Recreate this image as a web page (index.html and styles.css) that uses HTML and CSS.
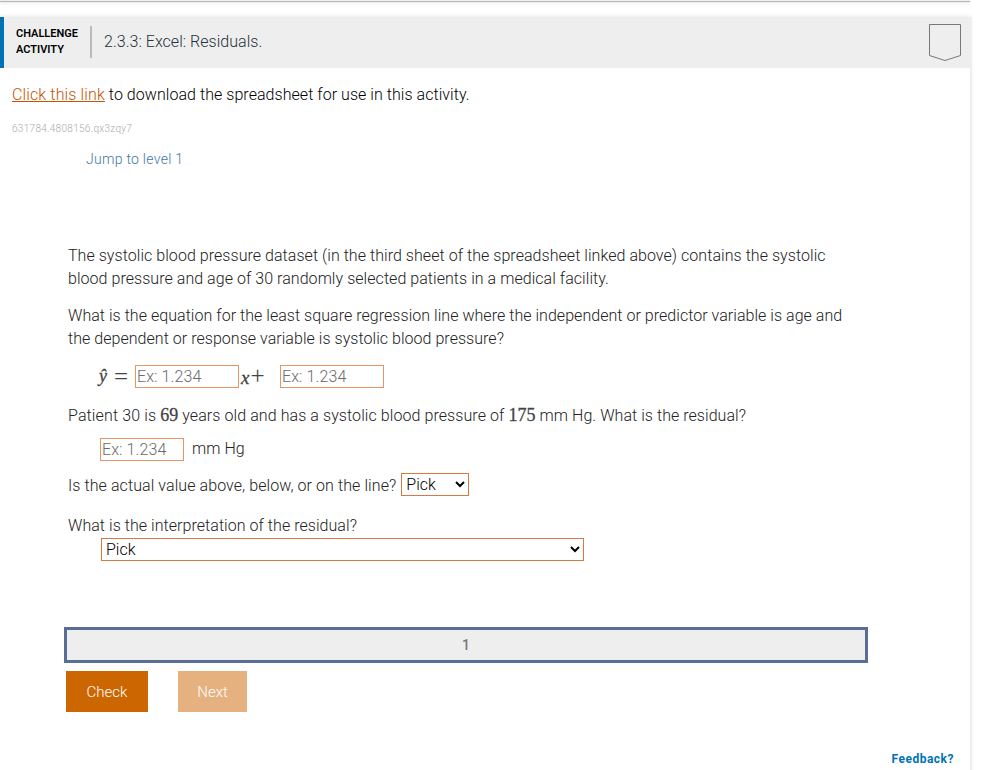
FILE: index.html
```html
<!DOCTYPE html>
<html lang="en">
<head>
    <meta charset="UTF-8">
    <meta name="viewport" content="width=device-width, initial-scale=1.0">
    <title>2.3.3: Excel: Residuals.</title>
    <link rel="stylesheet" href="styles.css">
</head>
<body>
    <div class="previous-card"></div>

    <div class="activity">
        <!-- Title bar -->
        <div class="activity-header">
            <div class="activity-type">CHALLENGE<br>ACTIVITY</div>
            <div class="activity-title">2.3.3: Excel: Residuals.</div>
            <svg class="bookmark" width="32" height="38" viewBox="0 0 32 38">
                <path d="M0.5 0.5H31.5V31.5L16 36.5L0.5 31.5Z" fill="none" stroke="#777" />
            </svg>
        </div>

        <div class="activity-body">
            <p class="download"><a href="#">Click this link</a> to download the spreadsheet for use in this activity.</p>
            <div class="activity-id">631784.4808156.qx3zqy7</div>
            <a class="jump" href="#">Jump to level 1</a>

            <!-- Question -->
            <form class="question">
                <p class="dataset">The systolic blood pressure dataset (in the third sheet of the spreadsheet linked above) contains the systolic<br>blood pressure and age of 30 randomly selected patients in a medical facility.</p>
                <p class="equation-text">What is the equation for the least square regression line where the independent or predictor variable is age and<br>the dependent or response variable is systolic blood pressure?</p>

                <div class="equation">
                    <span class="math y-hat"><i>ŷ</i></span>
                    <span class="math equals">=</span>
                    <input type="text" class="slope" placeholder="Ex: 1.234">
                    <span class="math x-plus"><i>x</i><span class="plus">+</span></span>
                    <input type="text" class="intercept" placeholder="Ex: 1.234">
                </div>

                <p class="patient"><span>Patient 30 is</span><span class="math number age">69</span><span class="patient-mid">years old and has a systolic blood pressure of</span><span class="math number pressure">175</span><span>mm Hg. What is the residual?</span></p>

                <div class="residual">
                    <input type="text" class="residual-input" placeholder="Ex: 1.234">
                    <span>mm Hg</span>
                </div>

                <div class="position">
                    <label for="position">Is the actual value above, below, or on the line?</label>
                    <select id="position">
                        <option>Pick</option>
                    </select>
                </div>

                <label class="interpretation-label" for="interpretation">What is the interpretation of the residual?</label>
                <select id="interpretation">
                    <option>Pick</option>
                </select>
            </form>

            <!-- Level progress and buttons -->
            <div class="level-bar">1</div>
            <div class="buttons">
                <button type="button" class="check">Check</button>
                <button type="button" class="next" disabled>Next</button>
            </div>

            <a class="feedback" href="#">Feedback?</a>
        </div>
    </div>
</body>
</html>
```

FILE: styles.css
```css
* {
    box-sizing: border-box;
}

body {
    margin: 0;
    height: 770px;
    overflow: hidden;
    background-color: white;
    font-family: Roboto, sans-serif;
    font-size: 16px;
    font-weight: 300;
    color: #263238;
}

p {
    margin: 0;
    white-space: nowrap;
}

.previous-card {
    width: 970px;
    height: 1px;
    margin-bottom: 16px;
    background-color: #eee;
    box-shadow: 0 1px 1px #aaa, 0 1px 4px rgba(0, 0, 0, 0.25);
}

.activity {
    width: 970px;
    height: 780px;
    box-shadow: 1px 0 0 #eee, 2px 0 0 #f0f0f0, 0 0 5px rgba(0, 0, 0, 0.12);
}

.activity-header {
    display: flex;
    align-items: flex-start;
    width: 971px;
    height: 51px;
    background-color: #eee;
    border-left: 4px solid #0072b5;
}

.activity-type {
    width: 88px;
    height: 32px;
    margin: 9px 0 0;
    padding-left: 12px;
    border-right: 2px solid #bbb;
    font-size: 11px;
    font-weight: 600;
    line-height: 16px;
    color: black;
}

.activity-title {
    flex: 1;
    padding: 14px 0 0 12px;
    line-height: 21px;
    letter-spacing: 0.03px;
}

.bookmark {
    margin: 7px 10px 0 0;
}

.activity-body {
    display: flex;
    flex-direction: column;
    padding: 15px 0 0 12px;
}

.download {
    line-height: 24px;
    letter-spacing: 0.05px;
    color: black;
}

.download a {
    letter-spacing: 0.13px;
    color: #c75300;
}

.activity-id {
    margin-top: 14px;
    font-size: 10px;
    line-height: 16px;
    letter-spacing: 0.3px;
    color: #aaa;
}

.jump {
    margin: 12px 0 0 74px;
    font-size: 14px;
    line-height: 20px;
    letter-spacing: 0.28px;
    color: #4077a5;
    text-decoration: none;
}

.question {
    display: flex;
    flex-direction: column;
    align-items: flex-start;
    margin: 75px 0 0 56px;
    line-height: 23px;
    letter-spacing: 0.05px;
    color: #222;
}

.equation-text {
    margin-top: 14px;
    letter-spacing: 0.04px;
}

.math {
    font-family: "Liberation Serif", serif;
    font-weight: 400;
    color: #444;
}

.number {
    font-size: 18px;
    -webkit-text-stroke: 0.3px #444;
}

input,
select {
    height: 23px;
    padding: 0 1px;
    border: 1px solid #e79563;
    border-radius: 0;
    background-color: white;
    font-family: Roboto, sans-serif;
    font-size: 16px;
    font-weight: 300;
    color: black;
}

input {
    margin: 1px 0 0;
    letter-spacing: 0.1px;
}

input::placeholder {
    color: #6a6a6a;
}

select {
    padding: 0;
    border-color: #d67a43;
}

.equation {
    display: flex;
    align-items: center;
    height: 24px;
    margin: 14px 0 0 30px;
}

.y-hat {
    width: 16px;
    padding-left: 1px;
    font-size: 18px;
    -webkit-text-stroke: 0.3px #444;
}

.equals {
    width: 21px;
    font-size: 25px;
}

.slope,
.intercept {
    width: 104px;
}

.x-plus {
    width: 41px;
    padding-left: 2px;
    font-size: 19px;
    -webkit-text-stroke: 0.3px #444;
}

.plus {
    margin-left: 1px;
    font-size: 25px;
    -webkit-text-stroke: 0;
}

.patient {
    display: flex;
    margin-top: 16px;
}

.patient span:first-child {
    letter-spacing: 0.12px;
}

.patient-mid {
    letter-spacing: 0.08px;
}

.age {
    margin: 0 4px;
}

.pressure {
    margin: 0 4px;
}

.residual {
    display: flex;
    height: 24px;
    gap: 8px;
    margin: 10px 0 0 32px;
}

.residual-input {
    width: 84px;
}

.position {
    display: flex;
    gap: 5px;
    margin-top: 12px;
}

.position label {
    margin-top: 1px;
    letter-spacing: 0.08px;
}

#position {
    width: 68px;
}

.interpretation-label {
    margin-top: 17px;
}

#interpretation {
    width: 483px;
    margin: 1px 0 0 33px;
}

.level-bar {
    width: 804px;
    height: 36px;
    margin: 66px 0 0 52px;
    border: 3px solid #586e94;
    background-color: #eee;
    font-size: 14px;
    font-weight: 500;
    line-height: 30px;
    text-align: center;
    color: #777;
}

.buttons {
    display: flex;
    gap: 30px;
    margin: 8px 0 0 54px;
}

.buttons button {
    height: 41px;
    padding: 0;
    border: none;
    font-family: Roboto, sans-serif;
    font-size: 15px;
    font-weight: 300;
    color: white;
}

.check {
    width: 82px;
    background-color: #cc6600;
}

.next {
    width: 69px;
    background-color: #e5b17f;
}

.feedback {
    align-self: flex-end;
    margin: 38px 16px 0 0;
    font-size: 12px;
    font-weight: 700;
    line-height: 18px;
    letter-spacing: 0.5px;
    color: #0072b5;
    text-decoration: none;
}
```
